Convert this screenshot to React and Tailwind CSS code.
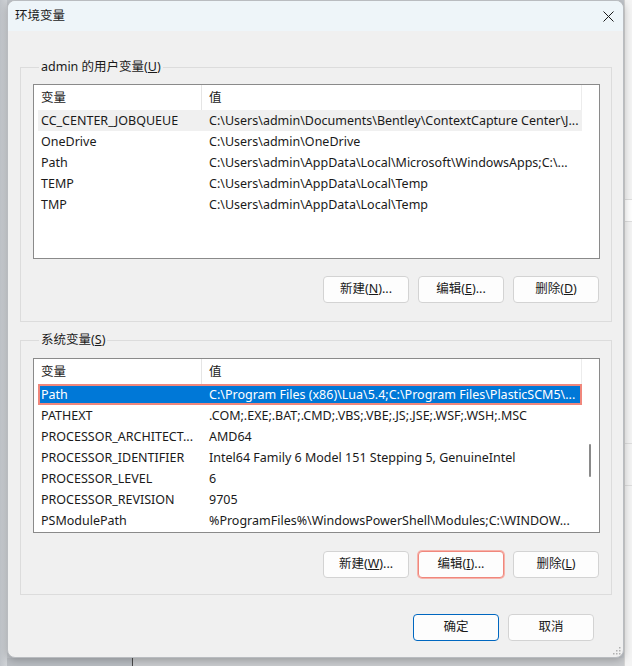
import React from "react";

const USER_ROWS = [
  ["CC_CENTER_JOBQUEUE", "C:\\Users\\admin\\Documents\\Bentley\\ContextCapture Center\\J..."],
  ["OneDrive", "C:\\Users\\admin\\OneDrive"],
  ["Path", "C:\\Users\\admin\\AppData\\Local\\Microsoft\\WindowsApps;C:\\..."],
  ["TEMP", "C:\\Users\\admin\\AppData\\Local\\Temp"],
  ["TMP", "C:\\Users\\admin\\AppData\\Local\\Temp"],
];

const SYS_ROWS = [
  ["Path", "C:\\Program Files (x86)\\Lua\\5.4;C:\\Program Files\\PlasticSCM5\\..."],
  ["PATHEXT", ".COM;.EXE;.BAT;.CMD;.VBS;.VBE;.JS;.JSE;.WSF;.WSH;.MSC"],
  ["PROCESSOR_ARCHITECT...", "AMD64"],
  ["PROCESSOR_IDENTIFIER", "Intel64 Family 6 Model 151 Stepping 5, GenuineIntel"],
  ["PROCESSOR_LEVEL", "6"],
  ["PROCESSOR_REVISION", "9705"],
  ["PSModulePath", "%ProgramFiles%\\WindowsPowerShell\\Modules;C:\\WINDOW..."],
];

function ListView({ rows, hovered, selected, thumb }) {
  return (
    <div className="w-[567px] h-[175px] border border-[#8a8a8a] bg-white flex overflow-hidden">
      <div className="w-[548px] pl-[4px] flex flex-col shrink-0">
        <div className="h-[25px] flex shrink-0 text-[#1a1a1a]">
          <div className="w-[164px] pl-[3px] leading-[25px] border-r border-[#e5e5e5]">变量</div>
          <div className="flex-1 pl-[7px] leading-[25px] border-r border-[#ececec]">值</div>
        </div>
        {rows.map(([name, value], i) => {
          const isSel = i === selected;
          const isHover = i === hovered;
          return (
            <div
              key={name + i}
              className={
                "h-[21px] flex shrink-0 whitespace-nowrap " +
                (isSel
                  ? "bg-[#0078d7] text-white shadow-[inset_0_0_0_2px_#f0877c]"
                  : isHover
                  ? "bg-[#f0f0f0] text-[#1a1a1a]"
                  : "text-[#1a1a1a]")
              }
            >
              <div className="w-[164px] pl-[3px] leading-[21px] overflow-hidden">{name}</div>
              <div className="flex-1 pl-[7px] leading-[21px] overflow-hidden">{value}</div>
            </div>
          );
        })}
      </div>
      <div className="flex-1 flex flex-col">
        {thumb && <div className="mt-[85px] ml-[7px] w-[2px] h-[33px] bg-[#8a8a8a] rounded-full" />}
      </div>
    </div>
  );
}

function Btn({ children, variant }) {
  const border =
    variant === "focus"
      ? "border-[#f0877c] shadow-[0_0_0_1px_#f6b3ab]"
      : variant === "default"
      ? "border-[#0067c0]"
      : "border-[#d3d3d3]";
  return (
    <button
      className={
        "w-[86px] h-[27px] rounded-[4px] border bg-[#fdfdfd] text-[#1a1a1a] flex items-center justify-center leading-none " +
        border
      }
    >
      {children}
    </button>
  );
}

function Group({ legend, children, className }) {
  return (
    <fieldset className={"ml-[12px] mr-[11px] min-w-0 border border-[#dcdcdc] pl-[12px] pr-[11px] " + className}>
      <legend className="ml-[6px] px-[2px] leading-[16px] text-[#1a1a1a]">{legend}</legend>
      {children}
    </fieldset>
  );
}

function Window() {
  return (
    <div className="relative h-[658px] w-[617px] rounded-[8px] bg-[#f0f0f0] border border-[#b9bcc0] shadow-[0_2px_8px_rgba(0,0,0,0.25)] flex flex-col overflow-hidden">
      <div className="h-[30px] bg-[#eef5f9] flex items-center justify-between shrink-0">
        <span className="pl-[7px] text-[12.5px] text-[#1a1a1a]">环境变量</span>
        <svg width="11" height="11" viewBox="0 0 11 11" className="mr-[9px]">
          <path d="M0.5 0.5 L10.5 10.5 M10.5 0.5 L0.5 10.5" stroke="#1a1a1a" strokeWidth="1" />
        </svg>
      </div>

      <Group
        className="mt-[28px] pt-[9px] pb-[18px]"
        legend={
          <>
            admin 的用户变量(<span className="underline">U</span>)
          </>
        }
      >
        <ListView rows={USER_ROWS} hovered={0} selected={-1} />
        <div className="mt-[17px] pr-[1px] flex justify-end gap-[9px]">
          <Btn>
            新建(<span className="underline">N</span>)...
          </Btn>
          <Btn>
            编辑(<span className="underline">E</span>)...
          </Btn>
          <Btn>
            删除(<span className="underline">D</span>)
          </Btn>
        </div>
      </Group>

      <Group
        className="mt-[10px] pt-[10px] pb-[16px]"
        legend={
          <>
            系统变量(<span className="underline">S</span>)
          </>
        }
      >
        <ListView rows={SYS_ROWS} selected={0} thumb />
        <div className="mt-[18px] pr-[1px] flex justify-end gap-[9px]">
          <Btn>
            新建(<span className="underline">W</span>)...
          </Btn>
          <Btn variant="focus">
            编辑(<span className="underline">I</span>)...
          </Btn>
          <Btn>
            删除(<span className="underline">L</span>)
          </Btn>
        </div>
      </Group>

      <div className="mt-[19px] flex justify-end gap-[9px] pr-[29px]">
        <Btn variant="default">确定</Btn>
        <Btn>取消</Btn>
      </div>

      <svg width="8" height="8" viewBox="0 0 8 8" className="absolute right-[2px] bottom-[2px]">
        <rect x="6" y="0" width="1.5" height="1.5" fill="#b0b0b0" />
        <rect x="3" y="3" width="1.5" height="1.5" fill="#b0b0b0" />
        <rect x="6" y="3" width="1.5" height="1.5" fill="#b0b0b0" />
        <rect x="0" y="6" width="1.5" height="1.5" fill="#b0b0b0" />
        <rect x="3" y="6" width="1.5" height="1.5" fill="#b0b0b0" />
        <rect x="6" y="6" width="1.5" height="1.5" fill="#b0b0b0" />
      </svg>
    </div>
  );
}

export default function App() {
  return (
    <div className="w-[632px] h-[666px] bg-[#c3c7cc] flex overflow-hidden font-['Noto_Sans','Noto_Sans_CJK_SC',sans-serif] text-[12.5px]">
      <div className="w-[7px] shrink-0 bg-gradient-to-r from-[#c0c4c9] to-[#d2d5d9]" />
      <div className="w-[617px] shrink-0 flex flex-col">
        <Window />
        <div className="flex-1 flex">
          <div className="w-[125px] bg-[#b9bdc2]" />
          <div className="w-[1px] bg-[#4a4a4a]" />
          <div className="flex-1 bg-[#c9cbce]" />
        </div>
      </div>
      <div className="flex-1 bg-[#f4f4f4] flex flex-col border-l border-[#d6d6d6]">
        <div className="h-[200px] border-b border-[#dedede]" />
        <div className="h-[22px] bg-white border-b border-[#dedede]" />
        <div className="h-[222px] border-b border-[#dedede]" />
        <div className="h-[42px] border-b border-[#dedede]" />
        <div className="flex-1" />
      </div>
    </div>
  );
}
